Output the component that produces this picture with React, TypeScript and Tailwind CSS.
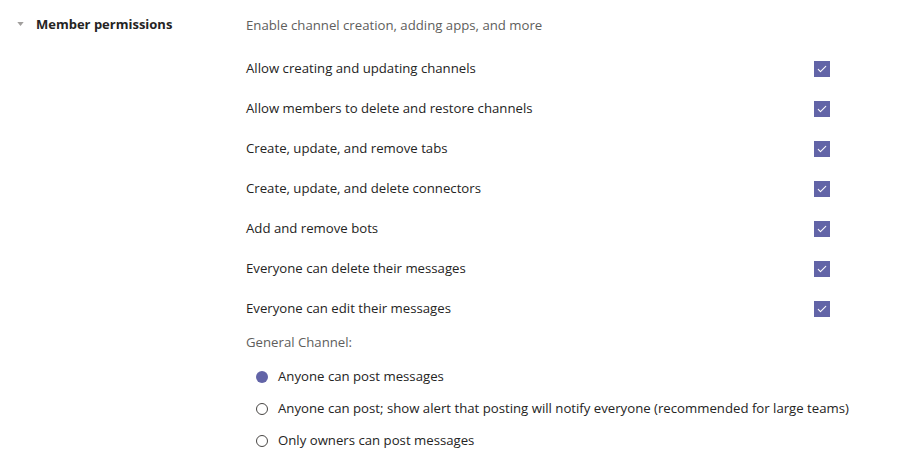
import { useState } from "react";

const permissions = [
  "Allow creating and updating channels",
  "Allow members to delete and restore channels",
  "Create, update, and remove tabs",
  "Create, update, and delete connectors",
  "Add and remove bots",
  "Everyone can delete their messages",
  "Everyone can edit their messages",
];

const postOptions = [
  "Anyone can post messages",
  "Anyone can post; show alert that posting will notify everyone (recommended for large teams)",
  "Only owners can post messages",
];

function Check() {
  return (
    <span className="flex h-4 w-4 items-center justify-center bg-[#6264a7]">
      <svg viewBox="0 0 16 16" className="h-3 w-3">
        <path d="M3 8.5l3 3 7-7" fill="none" stroke="white" strokeWidth="1.4" strokeLinecap="round" strokeLinejoin="round" />
      </svg>
    </span>
  );
}

export default function App() {
  const [post, setPost] = useState(0);

  return (
    <div className="h-[454px] w-[898px] bg-white font-['Open_Sans',sans-serif] text-[13.2px] text-[#252423]">
      <div className="flex pt-[15px]">
        {/* section header */}
        <div className="flex w-[246px] shrink-0 items-start pl-[17px]">
          <svg viewBox="0 0 8 5" className="mt-[7px] h-[4px] w-[7px]">
            <path d="M0 0h8L4 5z" fill="#a19f9d" />
          </svg>
          <span className="ml-[12px] text-[13px] font-bold leading-[18px] text-[#252423]">Member permissions</span>
        </div>

        {/* settings */}
        <div className="w-[584px]">
          <div className="leading-[20px] text-[#605e5c]">Enable channel creation, adding apps, and more</div>
          <div className="mt-[14px] flex flex-col">
            {permissions.map((p) => (
              <div key={p} className="flex h-[40px] items-center justify-between">
                <span>{p}</span>
                <Check />
              </div>
            ))}
          </div>
          <div className="mt-[3px] leading-[20px] text-[#605e5c]">General Channel:</div>
          <div className="mt-[9px] flex flex-col pl-[10px]">
            {postOptions.map((o, i) => (
              <label key={o} className="flex h-[32px] cursor-pointer items-center whitespace-nowrap" onClick={() => setPost(i)}>
                {post === i ? (
                  <span className="h-[12px] w-[12px] shrink-0 rounded-full bg-[#6264a7]" />
                ) : (
                  <span className="h-[12px] w-[12px] shrink-0 rounded-full border border-[#484644]" />
                )}
                <span className="ml-[10px]">{o}</span>
              </label>
            ))}
          </div>
        </div>
      </div>
    </div>
  );
}
